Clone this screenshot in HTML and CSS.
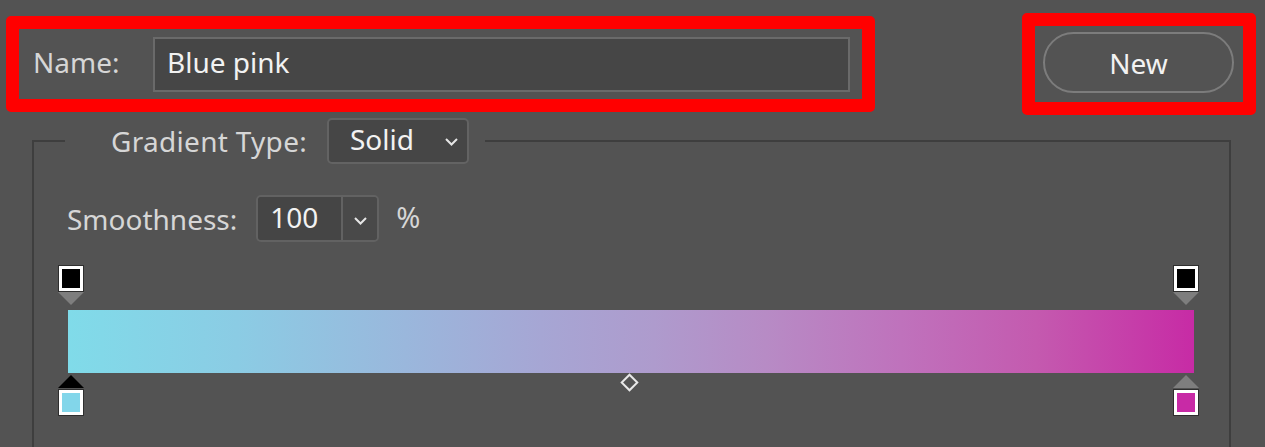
FILE: index.html
```html
<!DOCTYPE html>
<html lang="en">
<head>
<meta charset="utf-8">
<title>Gradient Editor</title>
<link rel="stylesheet" href="styles.css">
</head>
<body>
<div class="page">
  <div class="top-row">
    <div class="hl name-box">
      <span class="label name-label">Name:</span>
      <div class="name-input">Blue pink</div>
    </div>
    <div class="hl new-box">
      <button class="new-btn">New</button>
    </div>
  </div>

  <fieldset class="group">
    <legend class="legend">
      <span class="label type-label">Gradient Type:</span>
      <div class="select">
        <span class="select-value">Solid</span>
        <svg class="chev" width="15" height="10" viewBox="0 0 15 10"><path d="M2 2 L7.5 7.5 L13 2" fill="none" stroke="#e6e6e6" stroke-width="2"/></svg>
      </div>
    </legend>

    <div class="smooth-row">
      <span class="label">Smoothness:</span>
      <div class="combo">
        <div class="combo-value">100</div>
        <div class="combo-btn">
          <svg width="15" height="10" viewBox="0 0 15 10"><path d="M2 2 L7.5 7.5 L13 2" fill="none" stroke="#e6e6e6" stroke-width="2"/></svg>
        </div>
      </div>
      <span class="label pct">%</span>
    </div>

    <div class="editor">
      <div class="stop top left-stop">
        <div class="swatch"><div class="fill black"></div></div>
        <div class="tri-down"></div>
      </div>
      <div class="stop top right-stop">
        <div class="swatch"><div class="fill black"></div></div>
        <div class="tri-down"></div>
      </div>

      <div class="bar"></div>

      <div class="midpoint"></div>

      <div class="stop bottom left-stop">
        <div class="tri-up active"></div>
        <div class="swatch"><div class="fill cyan"></div></div>
      </div>
      <div class="stop bottom right-stop">
        <div class="tri-up"></div>
        <div class="swatch"><div class="fill magenta"></div></div>
      </div>
    </div>
  </fieldset>
</div>
</body>
</html>
```

FILE: styles.css
```css
html, body {
  margin: 0;
  padding: 0;
  background: #535353;
  overflow: hidden;
}

body {
  font-family: "Noto Sans", "Open Sans", sans-serif;
  color: #f0f0f0;
  width: 1265px;
  height: 447px;
}

.page {
  padding-top: 13px;
}

.top-row {
  display: flex;
  align-items: flex-start;
  height: 102px;
}

.hl {
  border: 13px solid #ff0000;
  border-radius: 5px;
  box-sizing: border-box;
}

.label {
  font-size: 28px;
  color: #d6d6d6;
  line-height: 1;
  white-space: nowrap;
}

.name-box {
  margin-left: 6px;
  margin-top: 3px;
  width: 869px;
  height: 96px;
  display: flex;
  align-items: center;
  padding: 0 12px 0 14px;
}

.name-label {
  width: 120px;
  flex: none;
  padding-bottom: 4px;
}

.name-input {
  flex: 1;
  height: 55px;
  box-sizing: border-box;
  background: #464646;
  border: 2px solid #6a6a6a;
  display: flex;
  align-items: center;
  padding-left: 12px;
  padding-bottom: 4px;
  font-size: 28px;
  color: #f2f2f2;
}

.new-box {
  margin-left: 147px;
  width: 234px;
  height: 102px;
  padding: 6px 0 0 8px;
}

.new-btn {
  width: 191px;
  height: 61px;
  border: 2px solid #7c7c7c;
  border-radius: 31px;
  background: #535353;
  color: #f2f2f2;
  font-family: "Noto Sans", "Open Sans", sans-serif;
  font-size: 28px;
  padding: 0;
}

.group {
  margin: 3px 0 0 32px;
  width: 1199px;
  box-sizing: border-box;
  border: 2px solid #3e3e3e;
  border-bottom: none;
  padding: 0;
  height: 340px;
}

.legend {
  margin-left: 31px;
  padding: 0 16px 0 46px;
  display: flex;
  align-items: center;
  gap: 17px;
}

.type-label {
  width: 199px;
  letter-spacing: 0.3px;
}

.select {
  width: 142px;
  height: 46px;
  box-sizing: border-box;
  background: #464646;
  border: 2px solid #636363;
  border-radius: 5px;
  display: flex;
  align-items: center;
  justify-content: space-between;
  padding: 0 8px 4px 21px;
}

.select-value {
  font-size: 28px;
  color: #f2f2f2;
  line-height: 1;
}

.chev {
  margin-top: 6px;
}

.smooth-row {
  display: flex;
  align-items: center;
  margin: 31px 0 0 33px;
  height: 47px;
}

.combo {
  margin-left: 19px;
  width: 123px;
  height: 47px;
  box-sizing: border-box;
  border: 2px solid #626262;
  border-radius: 5px;
  display: flex;
  overflow: hidden;
}

.combo-value {
  width: 85px;
  background: #454545;
  border-right: 2px solid #626262;
  font-size: 28px;
  color: #f2f2f2;
  display: flex;
  align-items: center;
  padding: 0 0 4px 12px;
  box-sizing: border-box;
}

.combo-btn {
  flex: 1;
  background: #494949;
  display: flex;
  align-items: center;
  justify-content: center;
  padding-top: 4px;
}

.pct {
  margin-left: 17px;
  padding-bottom: 4px;
  font-size: 29px;
}

.editor {
  position: relative;
  display: flow-root;
  margin-top: 20px;
  height: 170px;
}

.bar {
  margin: 48px 0 0 34px;
  width: 1126px;
  height: 63px;
  background: linear-gradient(to right,
    #80dbe9 0%,
    #8bcce4 15%,
    #9ab7dc 30%,
    #a6a6d4 42%,
    #ae9bcd 52%,
    #b78bc5 62%,
    #bf72bc 74%,
    #c45aaf 86%,
    #c72ba5 100%);
}

.stop {
  position: absolute;
  width: 26px;
  display: flex;
  flex-direction: column;
  align-items: center;
}

.stop.top { top: 4px; }
.stop.bottom { top: 113px; }
.left-stop { left: 24px; }
.right-stop { left: 1139px; }

.swatch {
  width: 24px;
  height: 25px;
  box-sizing: border-box;
  border: 3px solid #ffffff;
  outline: 1px solid #2e2e2e;
  padding: 0;
}

.fill {
  width: 100%;
  height: 100%;
}

.fill.black { background: #000000; }
.fill.cyan { background: #82d6ea; }
.fill.magenta { background: #c82aa6; }

.tri-down {
  width: 0;
  height: 0;
  border-left: 13px solid transparent;
  border-right: 13px solid transparent;
  border-top: 13px solid #7e7e7e;
  margin-top: 1px;
}

.tri-up {
  width: 0;
  height: 0;
  border-left: 13px solid transparent;
  border-right: 13px solid transparent;
  border-bottom: 13px solid #7e7e7e;
  margin-bottom: 2px;
}

.tri-up.active {
  border-bottom-color: #000000;
}

.midpoint {
  position: absolute;
  left: 589px;
  top: 114px;
  width: 9px;
  height: 9px;
  border: 2px solid #e8e8e8;
  transform: rotate(45deg);
}
```
